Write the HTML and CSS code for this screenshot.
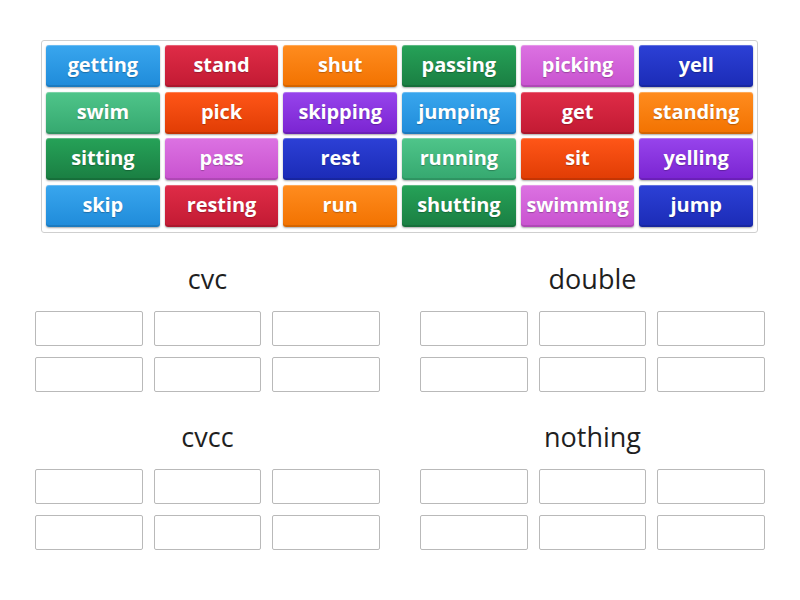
FILE: index.html
```html
<!DOCTYPE html>
<html>
<head>
<meta charset="utf-8">
<link rel="stylesheet" href="styles.css">
</head>
<body>
<div class="bank">
  <div class="tile c-blue">getting</div>
  <div class="tile c-red">stand</div>
  <div class="tile c-orange">shut</div>
  <div class="tile c-dgreen">passing</div>
  <div class="tile c-orchid">picking</div>
  <div class="tile c-royal">yell</div>
  <div class="tile c-green">swim</div>
  <div class="tile c-ored">pick</div>
  <div class="tile c-purple">skipping</div>
  <div class="tile c-blue">jumping</div>
  <div class="tile c-red">get</div>
  <div class="tile c-orange">standing</div>
  <div class="tile c-dgreen">sitting</div>
  <div class="tile c-orchid">pass</div>
  <div class="tile c-royal">rest</div>
  <div class="tile c-green">running</div>
  <div class="tile c-ored">sit</div>
  <div class="tile c-purple">yelling</div>
  <div class="tile c-blue">skip</div>
  <div class="tile c-red">resting</div>
  <div class="tile c-orange">run</div>
  <div class="tile c-dgreen">shutting</div>
  <div class="tile c-orchid">swimming</div>
  <div class="tile c-royal">jump</div>
</div>
<div class="groups">
  <div class="group">
    <div class="title">cvc</div>
    <div class="slots"><div class="slot"></div><div class="slot"></div><div class="slot"></div><div class="slot"></div><div class="slot"></div><div class="slot"></div></div>
  </div>
  <div class="group">
    <div class="title">double</div>
    <div class="slots"><div class="slot"></div><div class="slot"></div><div class="slot"></div><div class="slot"></div><div class="slot"></div><div class="slot"></div></div>
  </div>
  <div class="group">
    <div class="title">cvcc</div>
    <div class="slots"><div class="slot"></div><div class="slot"></div><div class="slot"></div><div class="slot"></div><div class="slot"></div><div class="slot"></div></div>
  </div>
  <div class="group">
    <div class="title">nothing</div>
    <div class="slots"><div class="slot"></div><div class="slot"></div><div class="slot"></div><div class="slot"></div><div class="slot"></div><div class="slot"></div></div>
  </div>
</div>
</body>
</html>
```
FILE: styles.css
```css
html, body {
  margin: 0;
  padding: 0;
  background: #ffffff;
  font-family: "Open Sans", "Noto Sans", sans-serif;
}
.bank {
  box-sizing: border-box;
  margin: 40px 0 0 41px;
  width: 717px;
  padding: 4px 4px 5px 4px;
  border: 1px solid #cfcfcf;
  border-radius: 3px;
  display: grid;
  grid-template-columns: repeat(6, 1fr);
  grid-auto-rows: 42px;
  column-gap: 5px;
  row-gap: 4.67px;
}
.tile {
  border-radius: 3px;
  color: #ffffff;
  font-weight: 700;
  font-size: 20px;
  display: flex;
  align-items: center;
  justify-content: center;
  padding-bottom: 3px;
  box-sizing: border-box;
  text-shadow: 0 1px 1px rgba(0,0,0,0.25);
  box-shadow: inset 0 1px 0 rgba(255,255,255,0.25), inset 0 -2px 0 rgba(0,0,0,0.12), 0 1px 2px rgba(0,0,0,0.35);
  white-space: nowrap;
  letter-spacing: -0.1px;
}
.c-blue { background: linear-gradient(#39a6ee, #1f8bd9); }
.c-red { background: linear-gradient(#df2c47, #c21a33); }
.c-orange { background: linear-gradient(#ff8c1f, #f27200); }
.c-dgreen { background: linear-gradient(#26a258, #1a7e42); }
.c-orchid { background: linear-gradient(#dc72e2, #c852cf); }
.c-royal { background: linear-gradient(#2c40d6, #1b2bb6); }
.c-green { background: linear-gradient(#4fc58a, #35a86f); }
.c-ored { background: linear-gradient(#ff5618, #e03c04); }
.c-purple { background: linear-gradient(#9744ec, #7a24d1); }

.groups {
  margin: 26px 0 0 35px;
  width: 730px;
  display: grid;
  grid-template-columns: 345px 345px;
  column-gap: 40px;
  row-gap: 25px;
}
.title {
  height: 40px;
  line-height: 40px;
  font-size: 27px;
  color: #1f1f1f;
  text-align: center;
  margin-bottom: 12px;
}
.slots {
  display: grid;
  grid-template-columns: repeat(3, 1fr);
  grid-auto-rows: 35px;
  column-gap: 11px;
  row-gap: 11px;
}
.slot {
  box-sizing: border-box;
  border: 1px solid #b9b9b9;
  border-radius: 2px;
  background: #ffffff;
}
```
